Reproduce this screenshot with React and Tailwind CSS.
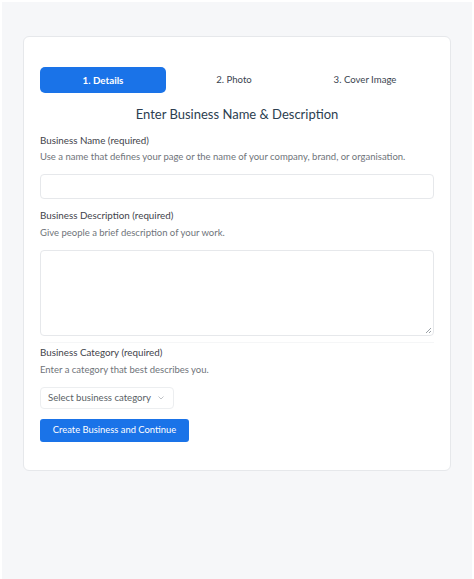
import React from "react";

export default function App() {
  return (
    <div className="w-[474px] h-[579px] bg-white pt-[2px] px-[2px]" style={{ fontFamily: "Lato, 'Noto Sans', sans-serif" }}>
      <div className="h-[577px] bg-[#f6f7f9] pt-[34px] pl-[21px] pr-[21px]">
        <div className="bg-white border border-[#e6e8eb] rounded-[6px] pt-[30px] pb-[28px] px-[16px]">
          <div className="grid grid-cols-3 gap-[5px] w-[388px]">
            <div className="h-[26px] rounded-[5px] bg-[#1a73e8] text-white text-[9.8px] font-bold flex items-center justify-center">1. Details</div>
            <div className="h-[26px] text-[#3b4450] text-[9.6px] flex items-center justify-center">2. Photo</div>
            <div className="h-[26px] text-[#3b4450] text-[9.6px] flex items-center justify-center">3. Cover Image</div>
          </div>
          <h2 className="mt-[12px] text-center text-[13px] text-[#2c3e50] leading-[18px]">Enter Business Name &amp; Description</h2>
          <div className="mt-[10px] text-[9.8px] text-[#3f444b] leading-[14px]">Business Name (required)</div>
          <div className="mt-[3px] text-[9.5px] text-[#6f747a] leading-[14px] whitespace-nowrap">Use a name that defines your page or the name of your company, brand, or organisation.</div>
          <div className="mt-[10px] h-[25px] border border-[#e6e8eb] rounded-[4px]"></div>
          <div className="mt-[9px] text-[9.8px] text-[#3f444b] leading-[14px]">Business Description (required)</div>
          <div className="mt-[4px] text-[9.5px] text-[#6f747a] leading-[14px]">Give people a brief description of your work.</div>
          <div className="mt-[10px] h-[86px] border border-[#e6e8eb] rounded-[4px] relative">
            <svg className="absolute right-[1px] bottom-[1px]" width="7" height="7" viewBox="0 0 7 7">
              <path d="M6 1 L1 6 M6 4 L4 6" stroke="#9aa0a6" strokeWidth="1" />
            </svg>
          </div>
          <div className="mt-[6px] border-t border-[#f5f6f7]"></div>
          <div className="mt-[2px] text-[9.8px] text-[#3f444b] leading-[14px]">Business Category (required)</div>
          <div className="mt-[4px] text-[9.5px] text-[#6f747a] leading-[14px]">Enter a category that best describes you.</div>
          <div className="mt-[10px] w-[134px] h-[22px] border border-[#eceef0] rounded-[4px] flex items-center pl-[7px] pr-[9px] justify-between">
            <span className="text-[9.6px] text-[#5a5f66] whitespace-nowrap">Select business category</span>
            <svg width="6" height="4" viewBox="0 0 6 4"><path d="M0.5 0.5 L3 3 L5.5 0.5" stroke="#b0b4b9" fill="none" strokeWidth="0.8" /></svg>
          </div>
          <div className="mt-[10px] w-[149px] h-[23px] rounded-[3px] bg-[#1a73e8] text-white text-[9.4px] flex items-center justify-center whitespace-nowrap">Create Business and Continue</div>
        </div>
      </div>
    </div>
  );
}
